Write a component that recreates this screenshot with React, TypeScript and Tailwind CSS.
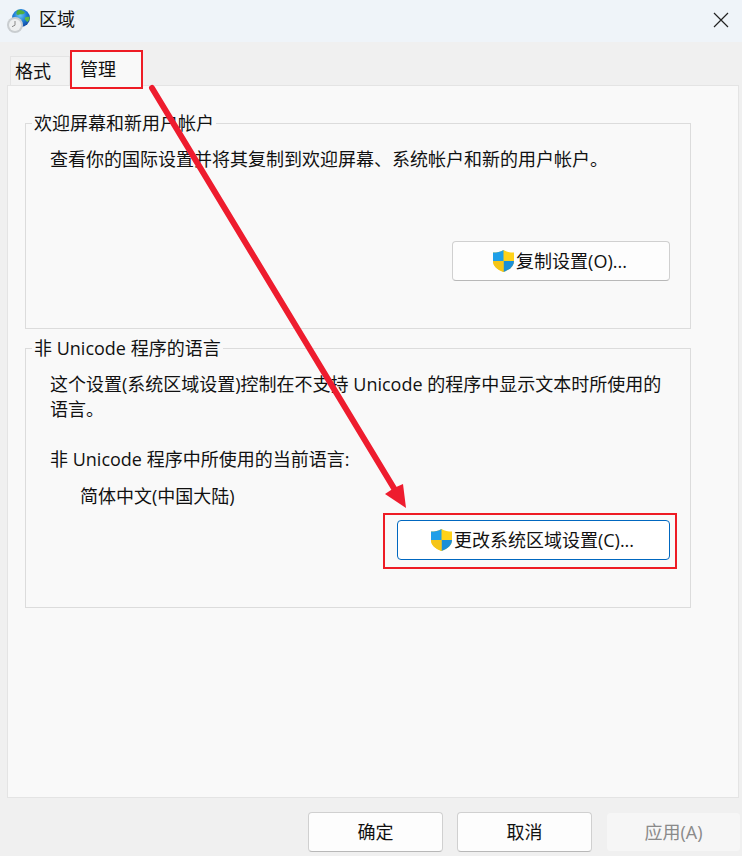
const FONT = 'font-["Open_Sans","Noto_Sans_CJK_SC",sans-serif]';

function ShieldIcon() {
    return (
        <svg width="23" height="24" viewBox="0 0 23 24" className="shrink-0 mr-[1px] ml-[-3px]">
            <path d="M11.500 1C8.500 3 5 3.600 1 3.600V12c0 5 4 8.800 10.500 11 6.500-2.200 10.500-6 10.500-11V3.600C18 3.600 14.500 3 11.500 1Z" fill="#ffd21a" />
            <path d="M11.500 1C8.500 3 5 3.600 1 3.600V12h10.500Z" fill="#1f9fe8" />
            <path d="M11.500 12H22c0 5-4 8.800-10.500 11Z" fill="#1a8fd8" />
            <path d="M1 12h10.500v11C5 20.800 1 17 1 12Z" fill="#f5c518" />
        </svg>
    );
}

function GlobeIcon() {
    return (
        <svg width="24" height="24" viewBox="0 0 24 24" className="shrink-0 mt-[-1px]">
            <defs>
                <radialGradient id="globe" cx="0.45" cy="0.35" r="0.7">
                    <stop offset="0" stopColor="#6cc8f2" />
                    <stop offset="0.55" stopColor="#1a78d4" />
                    <stop offset="1" stopColor="#123f96" />
                </radialGradient>
            </defs>
            <circle cx="14" cy="9" r="9" fill="url(#globe)" />
            <path d="M12 .800c2 .400 4.500 1 5.500 2.200s-1 2.300-3 2.200-3 1-4.200.600-1-2.200-.500-3.200S11 1 12 .800Z" fill="#4fae3f" />
            <path d="M18 8.500c1.500-.800 3.500-1 4.700-.300 0 1.800-.800 3.600-2.200 4.800-1-.600-3.500-2.500-2.500-4.500Z" fill="#5cb848" />
            <circle cx="8" cy="16" r="8" fill="#c9cdd0" />
            <circle cx="8" cy="16" r="6" fill="#eef0f1" />
            <path d="M8 12v4.200l-3 1.500" fill="none" stroke="#8a8a8a" strokeWidth="1" />
        </svg>
    );
}

function Group({ title, className, children }: { title: string; className: string; children: React.ReactNode }) {
    return (
        <div className={`relative border border-[#dcdcdc] flex flex-col w-[666px] ${className}`}>
            <span className="absolute left-[6px] top-[-13px] px-[2px] bg-[#f9f9f9] leading-[25px]">{title}</span>
            {children}
        </div>
    );
}

function Button({ label, shield, focus, disabled, className = '' }: { label: string; shield?: boolean; focus?: boolean; disabled?: boolean; className?: string }) {
    return (
        <div
            className={`h-[40px] rounded-[4px] flex items-center justify-center border ${
                disabled
                    ? 'border-[#f0f0f0] bg-[#f6f6f6] text-[#8a8a8a]'
                    : focus
                      ? 'border-[#0067c0] bg-white'
                      : 'border-[#d0d0d0] border-b-[#b8b8b8] bg-[#fdfdfd]'
            } ${className}`}
        >
            {shield && <ShieldIcon />}
            <span>{label}</span>
        </div>
    );
}

export default function App() {
    return (
        <div className={`relative w-[742px] h-[856px] overflow-hidden flex flex-col bg-[#f0f0f0] text-[18px] text-[#111] ${FONT}`}>
            {/* title bar */}
            <div className="h-[42px] shrink-0 bg-[#eff4f9] flex items-center pl-[7px] pr-[13px]">
                <GlobeIcon />
                <span className="ml-[8px] mt-[-3px]">区域</span>
                <svg width="16" height="16" viewBox="0 0 16 16" className="ml-auto mt-[-3px]">
                    <path d="M1 1l14 14M15 1L1 15" stroke="#222" strokeWidth="1.200" fill="none" />
                </svg>
            </div>

            {/* tabs */}
            <div className="h-[43px] shrink-0 flex items-end pl-[10px]">
                <div className="w-[60px] h-[29px] border border-b-0 border-[#e4e4e4] bg-[#f3f3f3] pl-[4px] leading-[29px]">格式</div>
                <div className="relative z-10 w-[73px] h-[39px] mb-[-4px] border-2 border-[#ee1c25] bg-[#f9f9f9] pl-[8px] leading-[34px]">管理</div>
            </div>

            {/* panel */}
            <div className="ml-[7px] w-[732px] h-[713px] shrink-0 border border-[#e4e4e4] bg-[#f9f9f9] pl-[17px] pt-[37px] flex flex-col gap-[19px]">
                <Group title="欢迎屏幕和新用户帐户" className="h-[206px]">
                    <p className="pl-[24px] pt-[23px] leading-[25px]">查看你的国际设置并将其复制到欢迎屏幕、系统帐户和新的用户帐户。</p>
                    <div className="mt-[69px] flex justify-end pr-[20px]">
                        <Button label="复制设置(O)..." shield className="w-[218px]" />
                    </div>
                </Group>
                <Group title="非 Unicode 程序的语言" className="h-[260px]">
                    <p className="pl-[24px] pt-[23px] leading-[25px]">
                        这个设置(系统区域设置)控制在不支持 Unicode 的程序中显示文本时所使用的
                        <br />
                        语言。
                    </p>
                    <p className="pl-[24px] pt-[25px] leading-[25px]">非 Unicode 程序中所使用的当前语言:</p>
                    <p className="pl-[54px] pt-[12px] leading-[25px]">简体中文(中国大陆)</p>
                    <div className="mt-[4px] self-end mr-[13px] border-2 border-[#ee1c25] pl-[12px] pr-[5px] pt-[5px] pb-[7px]">
                        <Button label="更改系统区域设置(C)..." shield focus className="w-[273px]" />
                    </div>
                </Group>
            </div>

            {/* footer */}
            <div className="flex justify-end gap-[14px] pt-[14px] pr-[1px]">
                <Button label="确定" className="w-[135px]" />
                <Button label="取消" className="w-[135px]" />
                <Button label="应用(A)" disabled className="w-[135px]" />
            </div>

            {/* annotation arrow */}
            <svg className="absolute left-0 top-0 z-20 pointer-events-none" width="742" height="856" viewBox="0 0 742 856">
                <path d="M152 88L395 490" stroke="#ee1c2e" strokeWidth="6" fill="none" strokeLinecap="round" />
                <path d="M406 508L385 494L394 488L403 484Z" fill="#ee1c2e" />
            </svg>
        </div>
    );
}
